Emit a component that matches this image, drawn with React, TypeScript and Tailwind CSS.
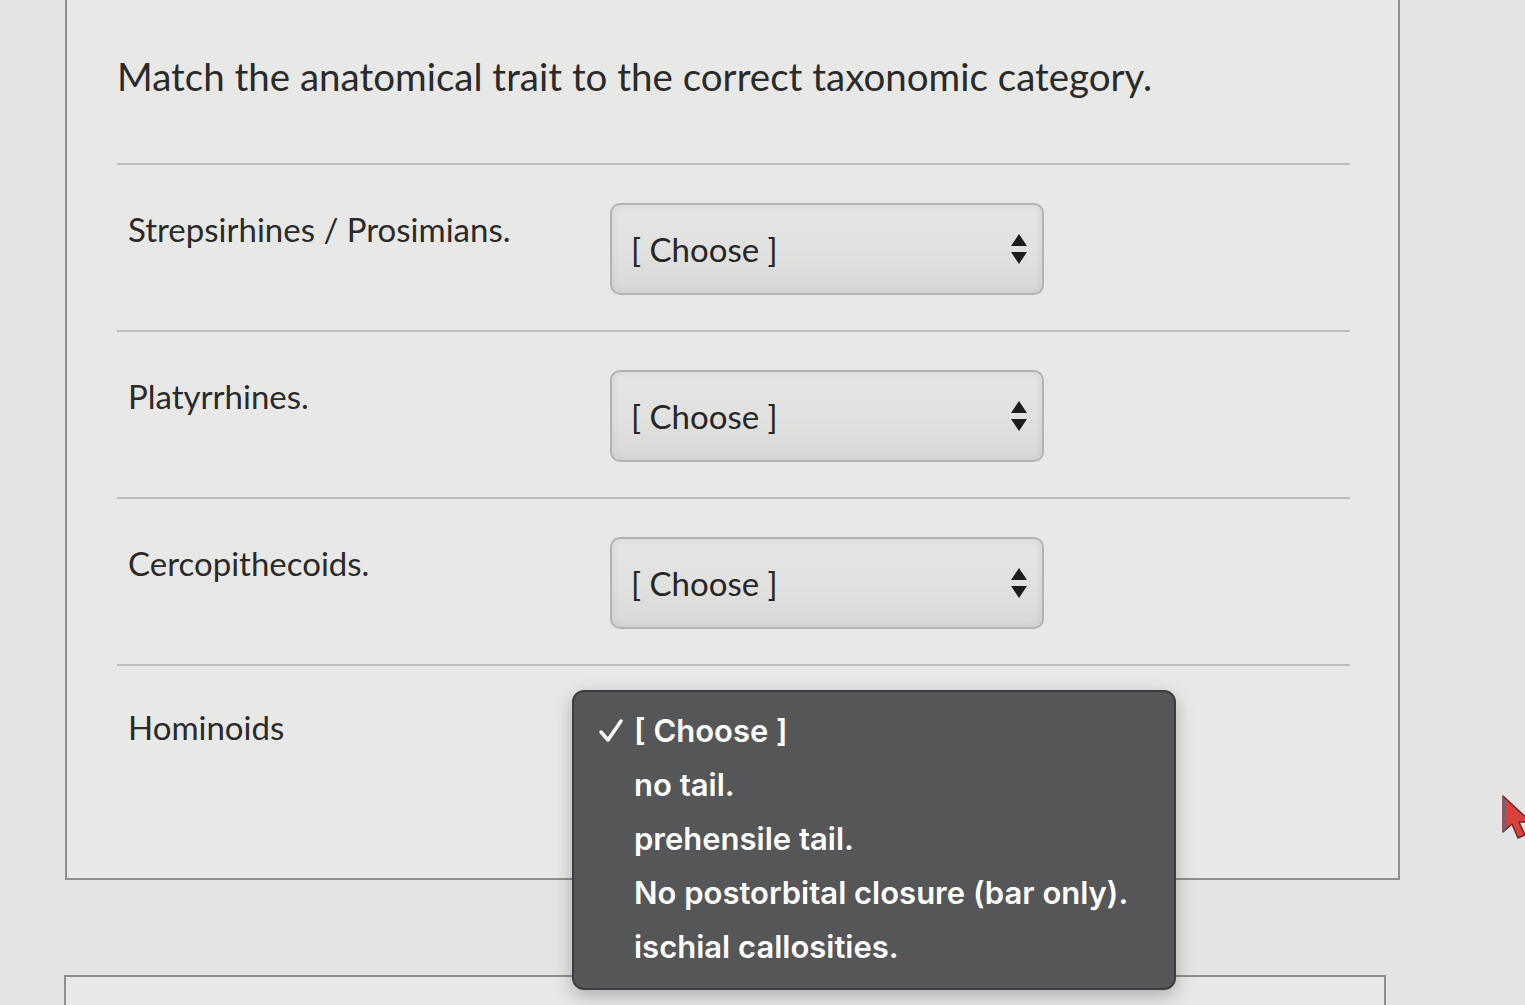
const rows = [
  { label: 'Strepsirhines / Prosimians.' },
  { label: 'Platyrrhines.' },
  { label: 'Cercopithecoids.' },
];

const options = [
  '[ Choose ]',
  'no tail.',
  'prehensile tail.',
  'No postorbital closure (bar only).',
  'ischial callosities.',
];

function SelectArrows() {
  return (
    <svg width="18" height="32" viewBox="0 0 18 32" className="shrink-0">
      <path d="M9 1 L17 13 L1 13 Z" fill="#1c1c1c" />
      <path d="M9 31 L17 19 L1 19 Z" fill="#1c1c1c" />
    </svg>
  );
}

function FakeSelect() {
  return (
    <div className="flex h-[92px] w-[434px] items-center justify-between rounded-[10px] border-2 border-[#b3b3b3] bg-gradient-to-b from-[#e6e6e4] via-[#e1e1df] to-[#d9d9d7] pl-[19px] pr-[14px] shadow-[inset_0_0_10px_rgba(0,0,0,0.08)]">
      <span className="text-[33px] leading-none text-[#262626]">[ Choose ]</span>
      <SelectArrows />
    </div>
  );
}

function Check() {
  return (
    <svg width="26" height="26" viewBox="0 0 26 26">
      <path d="M3 14 L10 22 L23 3" fill="none" stroke="#fff" strokeWidth="3.5" strokeLinecap="round" strokeLinejoin="round" />
    </svg>
  );
}

function Cursor() {
  return (
    <svg width="34" height="48" viewBox="0 0 34 48" className="absolute left-[1500px] top-[794px]">
      <path
        d="M3 2 L3 38 L12 30 L18 44 L25 41 L19 28 L31 28 Z"
        fill="#d9413c"
        stroke="#6a2a2a"
        strokeWidth="1.5"
        strokeLinejoin="round"
      />
      <path d="M3 2 L3 38 L6 35 L6 8 Z" fill="#5a6a8a" />
    </svg>
  );
}

export default function App() {
  return (
    <div
      className="relative h-[1005px] w-[1525px] overflow-hidden bg-[#e4e4e2]"
      style={{ fontFamily: 'Lato, "Noto Sans", sans-serif' }}
    >
      {/* Question card */}
      <div className="ml-[65px] h-[880px] w-[1335px] border-2 border-t-0 border-[#8e8e8e] bg-[#e8e8e6] pl-[50px] pr-[48px]">
        <h1 className="pt-[52px] text-[38.5px] font-normal leading-[48px] text-[#2a2a2a]">
          Match the anatomical trait to the correct taxonomic category.
        </h1>

        <div className="mt-[63px]">
          {rows.map((r) => (
            <div key={r.label} className="flex h-[167px] border-t-2 border-[#bdbdbb] pt-[38px]">
              <div className="w-[493px] pl-[11px] pt-[7px] text-[33px] leading-[38px] text-[#2a2a2a]">
                {r.label}
              </div>
              <FakeSelect />
            </div>
          ))}
          <div className="flex h-[210px] border-t-2 border-[#bdbdbb] pt-[40px]">
            <div className="w-[493px] pl-[11px] pt-[2px] text-[33px] leading-[38px] text-[#2a2a2a]">
              Hominoids
            </div>
          </div>
        </div>
      </div>

      {/* Next card peeking in */}
      <div className="ml-[64px] mt-[95px] h-[60px] w-[1322px] border-2 border-b-0 border-[#8e8e8e] bg-[#e8e8e6]" />

      {/* Open dropdown menu */}
      <div
        className="absolute left-[572px] top-[690px] w-[604px] rounded-[12px] border-2 border-[#3c3d3e] bg-[#545657] pb-[14px] pl-[24px] pt-[12px] shadow-[0_6px_18px_rgba(0,0,0,0.25)]"
        style={{ fontFamily: 'Inter, "Noto Sans", sans-serif' }}
      >
        {options.map((o, i) => (
          <div key={o} className="flex h-[54px] items-center text-[31px] font-semibold text-white">
            <span className="w-[36px]">{i === 0 ? <Check /> : null}</span>
            <span>{o}</span>
          </div>
        ))}
      </div>

      <Cursor />
    </div>
  );
}
